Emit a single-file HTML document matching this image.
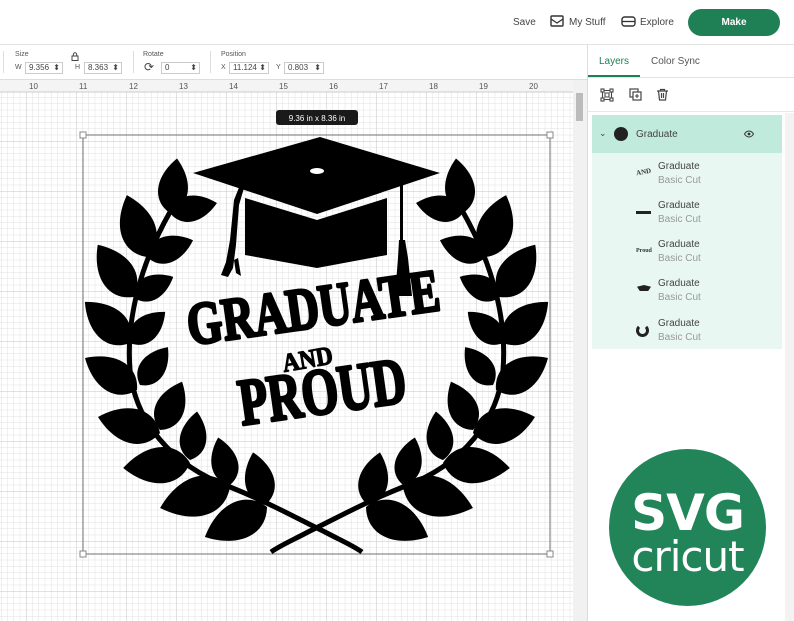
<!DOCTYPE html>
<html><head><meta charset="utf-8"><style>
*{margin:0;padding:0;box-sizing:border-box}
body{width:794px;height:621px;overflow:hidden;background:#fff;font-family:"Liberation Sans",sans-serif;position:relative;color:#333}
.abs{position:absolute}
.top{left:0;top:0;width:794px;height:45px;border-bottom:1px solid #e3e3e3}
.tb{left:0;top:45px;width:587px;height:35px;border-bottom:1px solid #ddd;font-size:7px;color:#555}
.inp{position:absolute;height:12px;border:1px solid #ccc;font-size:8px;color:#444;padding-left:3px;line-height:10px}
.canvas{left:0;top:80px;width:573px;height:541px;overflow:hidden;background:#fff}
.panel{left:587px;top:45px;width:207px;height:576px;border-left:1px solid #ddd}
.lay{font-size:10px;color:#444}
.sub{color:#999}
</style></head><body>
<div class="abs top">
 <div class="abs" style="left:513px;top:17px;font-size:10px;color:#444">Save</div>
 <svg class="abs" style="left:550px;top:15px" width="14" height="12" viewBox="0 0 14 12"><rect x="1" y="1" width="12" height="10" rx="1" fill="none" stroke="#333" stroke-width="1.4"/><path d="M1 4 L7 8 L13 4" fill="none" stroke="#333" stroke-width="1.3"/></svg>
 <div class="abs" style="left:569px;top:17px;font-size:10px;color:#444">My Stuff</div>
 <svg class="abs" style="left:621px;top:16px" width="15" height="11" viewBox="0 0 15 11"><rect x="1" y="1" width="13" height="9" rx="2.5" fill="none" stroke="#333" stroke-width="1.4"/><line x1="1" y1="5.5" x2="14" y2="5.5" stroke="#333" stroke-width="1.3"/></svg>
 <div class="abs" style="left:640px;top:17px;font-size:10px;color:#444">Explore</div>
 <div class="abs" style="left:688px;top:9px;width:92px;height:27px;border-radius:14px;background:#1f7f55;color:#fff;font-weight:bold;font-size:10px;text-align:center;line-height:27px">Make</div>
</div>
<div class="abs tb">
 <div class="abs" style="left:3px;top:6px;width:1px;height:22px;background:#ddd"></div>
 <div class="abs" style="left:15px;top:6px">Size</div>
 <div class="abs" style="left:15px;top:19px">W</div>
 <div class="inp" style="left:25px;top:17px;width:38px">9.356 <span style="float:right;padding-right:2px">⬍</span></div>
 <svg class="abs" style="left:71px;top:7px" width="8" height="9" viewBox="0 0 8 9"><rect x="1" y="4" width="6" height="4.5" fill="none" stroke="#444"/><path d="M2.3 4V2.5a1.7 1.7 0 0 1 3.4 0V4" fill="none" stroke="#444"/></svg>
 <div class="abs" style="left:75px;top:19px">H</div>
 <div class="inp" style="left:84px;top:17px;width:38px">8.363 <span style="float:right;padding-right:2px">⬍</span></div>
 <div class="abs" style="left:133px;top:6px;width:1px;height:22px;background:#ddd"></div>
 <div class="abs" style="left:143px;top:6px">Rotate</div>
 <div class="abs" style="left:144px;top:15px;font-size:12px;color:#444">⟳</div>
 <div class="inp" style="left:161px;top:17px;width:39px">0 <span style="float:right;padding-right:2px">⬍</span></div>
 <div class="abs" style="left:210px;top:6px;width:1px;height:22px;background:#ddd"></div>
 <div class="abs" style="left:221px;top:6px">Position</div>
 <div class="abs" style="left:221px;top:19px">X</div>
 <div class="inp" style="left:229px;top:17px;width:40px">11.124 <span style="float:right;padding-right:2px">⬍</span></div>
 <div class="abs" style="left:276px;top:19px">Y</div>
 <div class="inp" style="left:284px;top:17px;width:40px">0.803 <span style="float:right;padding-right:2px">⬍</span></div>
</div>
<div class="abs canvas">
<svg width="573" height="541" viewBox="0 80 573 541">
<defs>
 <pattern id="mn" x="1.5" y="91.5" width="6.25" height="6.25" patternUnits="userSpaceOnUse"><path d="M6.25 0V6.25H0" fill="none" stroke="#e0e0e0" stroke-width="1"/></pattern>
 <pattern id="mj" x="-23.5" y="91.5" width="50" height="50" patternUnits="userSpaceOnUse"><path d="M50 0V50H0" fill="none" stroke="#c4c4c4" stroke-width="1"/></pattern>
 <path id="lf" d="M0,0 C0.18,-0.36 0.62,-0.36 1,0 C0.62,0.36 0.18,0.36 0,0Z"/>
</defs>
<rect x="0" y="92" width="573" height="529" fill="url(#mn)"/>
<rect x="0" y="92" width="573" height="529" fill="url(#mj)"/>
<rect x="0" y="80" width="573" height="12" fill="#f4f4f4"/>
<line x1="0" y1="92" x2="573" y2="92" stroke="#ccc"/>
<g font-size="8" fill="#555" font-family="Liberation Sans">
<text x="29" y="89">10</text><text x="79" y="89">11</text><text x="129" y="89">12</text><text x="179" y="89">13</text><text x="229" y="89">14</text><text x="279" y="89">15</text><text x="329" y="89">16</text><text x="379" y="89">17</text><text x="429" y="89">18</text><text x="479" y="89">19</text><text x="529" y="89">20</text>
</g>
<rect x="276" y="110" width="82" height="15" rx="3" fill="#1a1a1a"/>
<text x="317" y="121" font-size="8" fill="#fff" text-anchor="middle" font-family="Liberation Sans">9.36  in x 8.36  in</text>
<rect x="83" y="135" width="467" height="419" fill="none" stroke="#888" stroke-width="1.2"/>
<g fill="#fff" stroke="#888"><rect x="80" y="132" width="6" height="6"/><rect x="547" y="132" width="6" height="6"/><rect x="80" y="551" width="6" height="6"/><rect x="547" y="551" width="6" height="6"/></g>
<g fill="#000">
 <g id="L">
  <path d="M170,212 C140,265 126,320 130,370 C135,420 170,465 230,487 C270,503 300,520 325,532 C340,540 352,545 362,552" fill="none" stroke="#000" stroke-width="5"/>
  <use href="#lf" transform="translate(170,213) rotate(-82.7) scale(55)"/>
  <use href="#lf" transform="translate(170,213) rotate(-12) scale(48)"/>
  <use href="#lf" transform="translate(147,257) rotate(-108) scale(65)"/>
  <use href="#lf" transform="translate(147,257) rotate(-20) scale(49)"/>
  <use href="#lf" transform="translate(133,297) rotate(-124) scale(63)"/>
  <use href="#lf" transform="translate(133,297) rotate(-26.6) scale(45)"/>
  <use href="#lf" transform="translate(130,343) rotate(-137.7) scale(61)"/>
  <use href="#lf" transform="translate(130,343) rotate(-41.5) scale(47)"/>
  <use href="#lf" transform="translate(137,390) rotate(-148.4) scale(61)"/>
  <use href="#lf" transform="translate(140,385) rotate(-53.6) scale(47)"/>
  <use href="#lf" transform="translate(160,433) rotate(-165.5) scale(64)"/>
  <use href="#lf" transform="translate(160,430) rotate(-65.4) scale(53)"/>
  <use href="#lf" transform="translate(190,463) rotate(175.7) scale(67)"/>
  <use href="#lf" transform="translate(190,460) rotate(-81.7) scale(49)"/>
  <use href="#lf" transform="translate(230,487) rotate(163.3) scale(73)"/>
  <use href="#lf" transform="translate(230,485) rotate(-104) scale(49)"/>
  <use href="#lf" transform="translate(267,507) rotate(154.2) scale(69)"/>
  <use href="#lf" transform="translate(265,505) rotate(-102.8) scale(54)"/>
 </g>
 <use href="#L" transform="translate(633,0) scale(-1,1)"/>
 <path d="M193,173 L320,137 L440,173 L317,214 Z"/>
 <ellipse cx="317" cy="171" rx="7" ry="3" fill="#fff"/>
 <path d="M245,198 L317,220 L387,198 L387,255 L317,268 L245,255 Z"/>
 <path d="M240,185 L234,200 L230,240 L226,262 L221,275 L228,277 L233,268 L236,245 L239,205 L244,188Z"/>
 <path d="M234,260 L236,273 L241,276 L238,258Z"/>
 <rect x="400" y="183" width="3" height="60"/>
 <path d="M399,240 L405,240 L408,258 L412,296 L395,296 L398,258Z"/>
</g>
<g font-family="Liberation Serif" font-weight="bold" fill="#000" stroke="#000" stroke-width="3" stroke-linejoin="round">
 <text x="0" y="0" font-size="60" transform="translate(190,345) rotate(-8) scale(0.8,1)" textLength="318" lengthAdjust="spacingAndGlyphs">GRADUATE</text>
 <text x="0" y="0" font-size="26" stroke-width="1.2" transform="translate(284,372) rotate(-10) scale(0.9,1)">AND</text>
 <text x="0" y="0" font-size="66" transform="translate(242,425) rotate(-8) scale(0.85,1)" textLength="198" lengthAdjust="spacingAndGlyphs">PROUD</text>
</g>
</svg>
</div>
<div class="abs" style="left:573px;top:80px;width:14px;height:541px;background:#f1f1f1"></div>
<div class="abs" style="left:576px;top:93px;width:7px;height:28px;background:#bbb"></div>
<div class="abs panel">
 <div class="abs" style="left:11px;top:11px;font-size:10px;color:#1f7f55">Layers</div>
 <div class="abs" style="left:63px;top:11px;font-size:10px;color:#555">Color Sync</div>
 <div class="abs" style="left:0;top:30px;width:52px;height:2px;background:#1f7f55"></div>
 <div class="abs" style="left:0;top:32px;width:207px;height:1px;background:#e3e3e3"></div>
 <svg class="abs" style="left:12px;top:43px" width="14" height="14" viewBox="0 0 14 14" fill="none" stroke="#444" stroke-width="1.1"><rect x="1" y="1" width="3" height="3"/><rect x="10" y="1" width="3" height="3"/><rect x="1" y="10" width="3" height="3"/><rect x="10" y="10" width="3" height="3"/><path d="M4 2.5h6M2.5 4v6M11.5 4v6M4 11.5h6M5 5h4v4H5z"/></svg>
 <svg class="abs" style="left:41px;top:43px" width="13" height="13" viewBox="0 0 13 13"><rect x="1" y="1" width="8" height="8" fill="none" stroke="#444" stroke-width="1.2"/><rect x="4" y="4" width="8" height="8" fill="#fff" stroke="#444" stroke-width="1.2"/><path d="M8 6v4M6 8h4" stroke="#444" stroke-width="1.1"/></svg>
 <svg class="abs" style="left:68px;top:43px" width="13" height="13" viewBox="0 0 13 13"><path d="M1 3h11M4.5 3V1.5h4V3M2.5 3l1 9h6l1-9M5.5 5v5M7.5 5v5" fill="none" stroke="#444" stroke-width="1.2"/></svg>
 <div class="abs" style="left:0;top:66px;width:207px;height:1px;background:#e8e8e8"></div>
 <div class="abs" style="left:197px;top:68px;width:10px;height:508px;background:#f3f3f3"></div>
 <div class="abs" style="left:4px;top:70px;width:190px;height:234px;background:#e8f7f1"></div>
 <div class="abs" style="left:4px;top:70px;width:190px;height:38px;background:#c0eadb"></div>
 <div class="abs lay" style="left:11px;top:83px;font-size:9px">⌄</div>
 <div class="abs" style="left:26px;top:82px;width:14px;height:14px;border-radius:50%;background:#222"></div>
 <div class="abs lay" style="left:48px;top:84px">Graduate</div>
 <svg class="abs" style="left:156px;top:85px" width="10" height="8" viewBox="0 0 10 8"><path d="M0.5 4C3 0 7 0 9.5 4C7 8 3 8 0.5 4Z" fill="none" stroke="#333" stroke-width="1"/><circle cx="5" cy="4" r="1.4" fill="#333"/></svg>
 <div class="abs lay" style="left:70px;top:115px;line-height:14px">Graduate<br><span class="sub">Basic Cut</span></div>
 <div class="abs lay" style="left:70px;top:154px;line-height:14px">Graduate<br><span class="sub">Basic Cut</span></div>
 <div class="abs lay" style="left:70px;top:193px;line-height:14px">Graduate<br><span class="sub">Basic Cut</span></div>
 <div class="abs lay" style="left:70px;top:232px;line-height:14px">Graduate<br><span class="sub">Basic Cut</span></div>
 <div class="abs lay" style="left:70px;top:272px;line-height:14px">Graduate<br><span class="sub">Basic Cut</span></div>
 <div class="abs" style="left:48px;top:123px;font:bold 7px 'Liberation Serif';transform:rotate(-10deg)">AND</div>
 <div class="abs" style="left:48px;top:166px;width:15px;height:3px;background:#222"></div>
 <div class="abs" style="left:48px;top:203px;font:bold 6px 'Liberation Serif'">Proud</div>
 <div class="abs" style="left:49px;top:240px;width:14px;height:6px;background:#222;clip-path:polygon(0 30%,50% 0,100% 30%,80% 100%,20% 100%)"></div>
 <div class="abs" style="left:48px;top:279px;width:13px;height:13px;border-radius:50%;border:3px solid #222;border-top-color:transparent"></div>
</div>
<div class="abs" style="left:609px;top:449px;width:157px;height:157px;border-radius:50%;background:#22855a"></div>
<div class="abs" style="left:609px;top:488px;width:157px;text-align:center;color:#fff;font:bold 50px 'DejaVu Sans',sans-serif;letter-spacing:-1px;line-height:50px">SVG</div>
<div class="abs" style="left:609px;top:535px;width:157px;text-align:center;color:#fff;font:42px 'DejaVu Sans',sans-serif;letter-spacing:-1px;line-height:44px">cricut</div>
</body></html>
